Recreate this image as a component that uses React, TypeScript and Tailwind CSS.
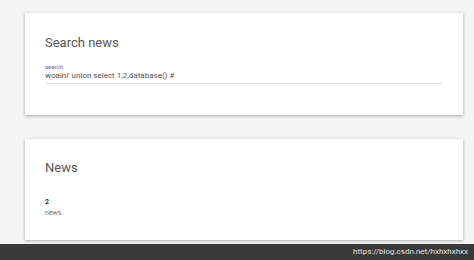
import React from 'react';

const font = { fontFamily: 'Roboto, "Liberation Sans", sans-serif' };

export default function App() {
  return (
    <div className="w-[474px] h-[260px] bg-[#f4f4f4] flex flex-col overflow-hidden" style={font}>
      <div className="flex-1 flex flex-col px-[25px] pt-[13px] pr-[11px]">
        {/* SEARCH CARD */}
        <div className="h-[102px] bg-white shadow-[0_1px_3px_rgba(0,0,0,0.3)] px-[20px] pt-[21px]">
          <h2 className="text-[13px] leading-[18px] text-[#555]">Search news</h2>
          <div className="mt-[11px] text-[6px] leading-[7px] text-[#5b62b0]">search</div>
          <div className="text-[8px] leading-[11px] text-[#555] border-b border-[#e2e2e2] pb-[2px]">
            woaini&apos; union select 1,2,database() #
          </div>
        </div>

        {/* NEWS CARD */}
        <div className="mt-[24px] h-[101px] bg-white shadow-[0_1px_3px_rgba(0,0,0,0.3)] px-[20px] pt-[21px]">
          <h2 className="text-[13px] leading-[16px] text-[#555]">News</h2>
          <div className="mt-[22px] text-[7px] leading-[9px] font-bold text-[#333]">2</div>
          <div className="mt-[2px] text-[7px] leading-[9px] text-[#777]">news</div>
        </div>
      </div>

      <div className="h-[16px] bg-[#3a3a3a] flex items-center justify-end pr-[6px]">
        <span className="text-[8px] text-[#e0e0e0]">https://blog.csdn.net/hxhxhxhxx</span>
      </div>
    </div>
  );
}
